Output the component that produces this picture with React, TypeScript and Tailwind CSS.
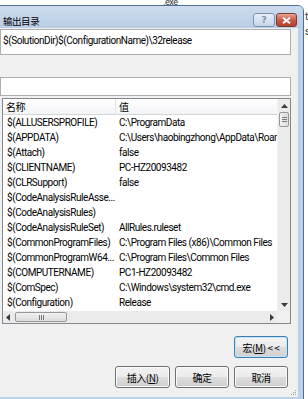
import React from "react";

const rows: [string, string][] = [
  ["$(ALLUSERSPROFILE)", "C:\\ProgramData"],
  ["$(APPDATA)", "C:\\Users\\haobingzhong\\AppData\\Roaming"],
  ["$(Attach)", "false"],
  ["$(CLIENTNAME)", "PC-HZ20093482"],
  ["$(CLRSupport)", "false"],
  ["$(CodeAnalysisRuleAsse...", ""],
  ["$(CodeAnalysisRules)", ""],
  ["$(CodeAnalysisRuleSet)", "AllRules.ruleset"],
  ["$(CommonProgramFiles)", "C:\\Program Files (x86)\\Common Files"],
  ["$(CommonProgramW64...", "C:\\Program Files\\Common Files"],
  ["$(COMPUTERNAME)", "PC1-HZ20093482"],
  ["$(ComSpec)", "C:\\Windows\\system32\\cmd.exe"],
  ["$(Configuration)", "Release"],
];

function Arrow({ dir }: { dir: "up" | "down" | "left" | "right" }) {
  const pts =
    dir === "up"
      ? "0,4 3.5,0 7,4"
      : dir === "down"
      ? "0,0 7,0 3.5,4"
      : dir === "left"
      ? "4,0 4,7 0,3.5"
      : "0,0 0,7 4,3.5";
  const w = dir === "up" || dir === "down" ? 7 : 4;
  const h = dir === "up" || dir === "down" ? 4 : 7;
  return (
    <svg width={w} height={h} viewBox={`0 0 ${w} ${h}`}>
      <polygon points={pts} fill="#3a3a3a" />
    </svg>
  );
}

function Btn({
  children,
  focused,
  w = "w-[55px]",
}: {
  children: React.ReactNode;
  focused?: boolean;
  w?: string;
}) {
  return (
    <div
      className={`${w} h-[22px] rounded-[3px] border flex items-center justify-center text-[10px] text-black ${
        focused
          ? "border-[#3c7fb1] shadow-[inset_0_0_0_1px_#bfe3f7] bg-[linear-gradient(#f4f4f4,#ebebeb_50%,#dcdcdc_50%,#d2d2d2)]"
          : "border-[#707070] shadow-[inset_0_0_0_1px_#fcfcfc] bg-[linear-gradient(#f2f2f2,#ebebeb_50%,#dddddd_50%,#cfcfcf)]"
      }`}
    >
      {children}
    </div>
  );
}

export default function App() {
  return (
    <div className="relative w-[308px] h-[399px] overflow-hidden bg-white font-['Roboto','Noto_Sans_CJK_SC',sans-serif] tracking-[-0.45px] text-black">
      {/* background window fragments */}
      <span className="absolute left-[163px] top-[-4px] text-[9px] text-[#333]">.exe</span>
      <span className="absolute left-[305px] top-[9px] text-[10px] text-[#333]">t</span>
      <span className="absolute left-[305px] top-[24px] text-[10px] text-[#333]">s</span>

      {/* dialog window */}
      <div className="absolute left-[-6px] top-[5px] w-[310px] h-[400px] rounded-t-[6px] border border-[#4f6f93] bg-[#bcd2ea] flex flex-col">
        {/* title bar */}
        <div className="h-[22px] flex items-start justify-between pl-[8px] pr-[6px] rounded-t-[5px] bg-[linear-gradient(#cddcee,#b9cde4)]">
          <span className="mt-[8px] text-[9.5px] leading-[14px] font-['Noto_Sans_CJK_SC',sans-serif] text-black">
            输出目录
          </span>
          <div className="flex mt-[7px] gap-[1px]">
            <div className="w-[22px] h-[14px] rounded-[3px] border border-[#7d92ae] bg-[linear-gradient(#e6eef7,#c6d5e7)] flex items-center justify-center">
              <span className="text-[9px] leading-none font-bold text-[#7e90a8] font-['DejaVu_Sans',sans-serif]">?</span>
            </div>
            <div className="w-[21px] h-[14px] rounded-[3px] border border-[#7a3b36] bg-[linear-gradient(#e8a493,#c75a48_50%,#b8412f)] flex items-center justify-center">
              <svg width="9" height="7" viewBox="0 0 9 7">
                <path d="M1 0.8 L8 6.2 M8 0.8 L1 6.2" stroke="white" strokeWidth="2" />
              </svg>
            </div>
          </div>
        </div>

        {/* client area */}
        <div className="mx-[5px] h-[369px] bg-[#f0f0f0] flex flex-col pr-[7px] relative">
          <div className="mt-[1px] h-[26px] bg-white border border-[#abadb3] pl-[2px] pt-[5px] text-[10px] leading-[12px]">
            $(SolutionDir)$(ConfigurationName)\32release
          </div>
          <div className="mt-[22px] h-[19px] bg-white border border-[#abadb3]" />

          {/* list view */}
          <div className="mt-[2px] ml-[2px] h-[226px] border border-[#828790] bg-white flex flex-col">
            <div className="flex flex-1 min-h-0">
              <div className="flex-1 min-w-0 overflow-hidden flex flex-col">
                <div className="h-[16px] shrink-0 flex border-b border-[#d5d5d5] bg-[linear-gradient(#ffffff,#f3f4f6)] text-[10px] font-['Noto_Sans_CJK_SC',sans-serif]">
                  <div className="w-[113px] shrink-0 pl-[3px] border-r border-[#e3e3e3] flex items-center">名称</div>
                  <div className="flex-1 pl-[3px] flex items-center">值</div>
                </div>
                {rows.map(([n, v], i) => (
                  <div key={i} className="h-[15px] shrink-0 flex text-[10px] leading-[15px] whitespace-nowrap">
                    <div className="w-[113px] shrink-0 pl-[4px] overflow-hidden">{n}</div>
                    <div className="flex-1 pl-[3px] overflow-hidden">{v}</div>
                  </div>
                ))}
              </div>
              {/* vertical scrollbar */}
              <div className="w-[13px] shrink-0 bg-[#ebebeb] border-l border-[#f3f3f3] flex flex-col items-center">
                <div className="h-[13px] flex items-center justify-center">
                  <Arrow dir="up" />
                </div>
                <div className="w-[10px] h-[15px] rounded-[2px] border border-[#979797] bg-[linear-gradient(90deg,#f1f1f1,#dcdcdc)] flex flex-col items-center justify-center gap-[1px]">
                  <div className="w-[5px] h-px bg-[#7a7a7a]" />
                  <div className="w-[5px] h-px bg-[#7a7a7a]" />
                  <div className="w-[5px] h-px bg-[#7a7a7a]" />
                </div>
                <div className="flex-1" />
                <div className="h-[13px] flex items-center justify-center">
                  <Arrow dir="down" />
                </div>
              </div>
            </div>
            {/* horizontal scrollbar */}
            <div className="h-[12px] shrink-0 flex">
              <div className="flex-1 bg-[#ebebeb] flex items-center">
                <div className="w-[10px] flex justify-center">
                  <Arrow dir="left" />
                </div>
                <div className="ml-[2px] w-[52px] h-[10px] rounded-[2px] border border-[#979797] bg-[linear-gradient(#f1f1f1,#dcdcdc)] flex items-center justify-center gap-[1px]">
                  <div className="w-px h-[5px] bg-[#7a7a7a]" />
                  <div className="w-px h-[5px] bg-[#7a7a7a]" />
                  <div className="w-px h-[5px] bg-[#7a7a7a]" />
                </div>
                <div className="flex-1" />
                <div className="w-[10px] flex justify-center">
                  <Arrow dir="right" />
                </div>
              </div>
              <div className="w-[13px] bg-[#f0f0f0]" />
            </div>
          </div>

          {/* buttons */}
          <div className="mt-[12px] flex justify-end pr-[3px]">
            <Btn focused w="w-[54px]">
              <span className="font-['Noto_Sans_CJK_SC',sans-serif]">
                宏(<span className="underline">M</span>)&nbsp;&lt; &lt;
              </span>
            </Btn>
          </div>
          <div className="mt-[8px] flex justify-end gap-[5px] pr-[3px] font-['Noto_Sans_CJK_SC',sans-serif]">
            <Btn>
              插入(<span className="underline">N</span>)
            </Btn>
            <Btn w="w-[54px]">确定</Btn>
            <Btn w="w-[54px]">取消</Btn>
          </div>

          {/* resize grip */}
          <svg className="absolute right-[1px] bottom-[1px]" width="7" height="7" viewBox="0 0 7 7">
            <rect x="5" y="1" width="1" height="1" fill="#a0a0a0" />
            <rect x="3" y="3" width="1" height="1" fill="#a0a0a0" />
            <rect x="5" y="3" width="1" height="1" fill="#a0a0a0" />
            <rect x="1" y="5" width="1" height="1" fill="#a0a0a0" />
            <rect x="3" y="5" width="1" height="1" fill="#a0a0a0" />
            <rect x="5" y="5" width="1" height="1" fill="#a0a0a0" />
          </svg>
        </div>
      </div>
    </div>
  );
}
